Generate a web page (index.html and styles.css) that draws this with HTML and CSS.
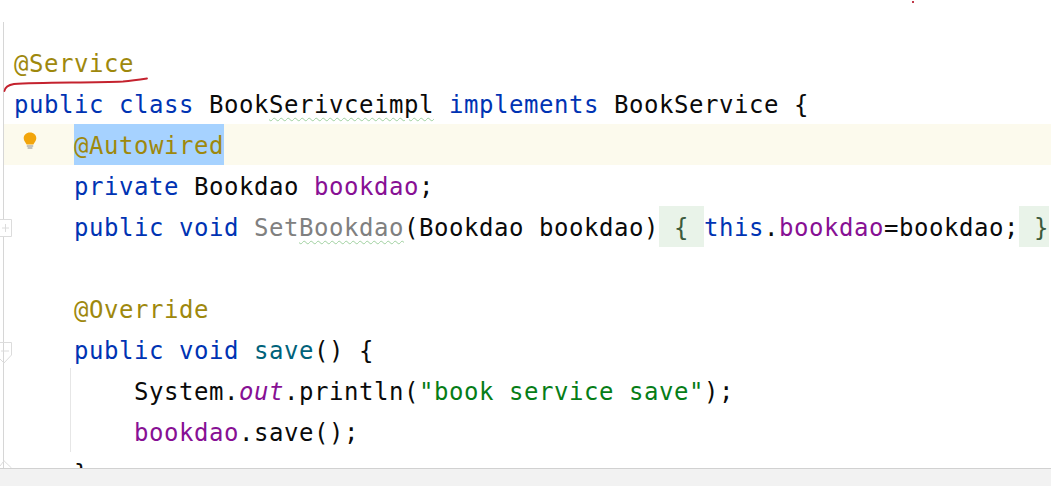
FILE: index.html
```html
<!DOCTYPE html>
<html lang="en">
<head>
<meta charset="utf-8">
<title>BookSerivceimpl</title>
<link rel="stylesheet" href="styles.css">
</head>
<body>
<main class="editor">
  <div class="gutter-line"></div>
  <div class="red-dot"></div>
  <svg class="scribble" width="160" height="20" viewBox="0 0 160 20" aria-hidden="true"><path d="M1.5 16 C2 12 5 10 11 9 C37 7 87 8 120 6.5 C130 5.5 137 4.5 144 3.5" fill="none" stroke="#c4222e" stroke-width="1.8" stroke-linecap="round"/></svg>
  <svg class="bulb" width="14" height="19" viewBox="0 0 14 19" aria-hidden="true"><path d="M7 0.5 C3.2 0.5 0.7 3 0.7 6.2 C0.7 9 2.6 10.2 3.6 12.4 L10.4 12.4 C11.4 10.2 13.3 9 13.3 6.2 C13.3 3 10.8 0.5 7 0.5 Z" fill="#f2a50c"/><path d="M3.8 14 H10.2 M4.6 16 H9.4" stroke="#8a8a8a" stroke-width="1.2" fill="none"/></svg>
  <svg class="fold fold-plus" width="13" height="18" viewBox="0 0 13 18" aria-hidden="true"><path d="M0 .5 H11.5 V17.5 H0 M2 9 H9 M5.5 5 V13" fill="none" stroke="#dcdcdc"/></svg>
  <svg class="fold fold-open" width="13" height="22" viewBox="0 0 13 22" aria-hidden="true"><path d="M0 .5 H11.5 V13 L4 21 L0 17 M1 9 H9" fill="none" stroke="#dcdcdc"/></svg>
  <svg class="fold fold-close" width="13" height="9" viewBox="0 0 13 9" aria-hidden="true"><path d="M0 6 L4 .8 L11.5 8" fill="none" stroke="#dcdcdc"/></svg>
  <div class="indent-guide"></div>
  <div class="code">
    <div class="line"><span class="ann">@Service</span></div>
    <div class="line"><span class="kw">public class</span> Book<span class="weak">Serivceimpl</span> <span class="kw">implements</span> BookService {</div>
    <div class="line line-caret">    <span class="ann sel">@Autowired</span></div>
    <div class="line">    <span class="kw">private</span> Bookdao <span class="field">bookdao</span>;</div>
    <div class="line">    <span class="kw">public void</span> <span class="unused">Set<span class="weak">Bookdao</span></span>(Bookdao bookdao)<span class="brace"> { </span><span class="kw">this</span>.<span class="field">bookdao</span>=bookdao;<span class="brace"> }</span></div>
    <div class="line"></div>
    <div class="line">    <span class="ann">@Override</span></div>
    <div class="line">    <span class="kw">public void</span> <span class="method">save</span>() {</div>
    <div class="line">        System.<span class="field static">out</span>.println(<span class="str">"book service save"</span>);</div>
    <div class="line">        <span class="field">bookdao</span>.save();</div>
    <div class="line">    }</div>
  </div>
</main>
<footer class="status"></footer>
</body>
</html>
```
FILE: styles.css
```css
html, body { margin: 0; height: 100%; overflow: hidden; background: #fff; }
body { display: flex; flex-direction: column; }

.editor { position: relative; flex: 1; min-height: 0; overflow: hidden; }
.status { height: 17px; flex: none; background: #f2f2f2; border-top: 1px solid #d1d1d1; }

.code {
  padding: 42px 0 0 14px;
  font-family: "DejaVu Sans Mono", "Liberation Mono", monospace;
  font-size: 24px;
  letter-spacing: 0.55px;
  color: #0a0a0a;
}
.line { height: 41px; line-height: 45px; white-space: pre; }
.line-caret { background: #fcfaed; margin-left: -11px; padding-left: 11px; }

.ann { color: #9e880d; }
.kw { color: #0033b3; }
.field { color: #871094; }
.static { font-style: italic; }
.method { color: #00627a; }
.str { color: #067d17; }
.unused { color: #808080; }
.sel { background: #a6d2ff; display: inline-block; height: 41px; }
.brace { background: #e9f3e9; color: #3c5a3c; display: inline-block; height: 41px; }
.weak { text-decoration: underline wavy #9fd09f 1px; text-underline-offset: 4px; }

.gutter-line { position: absolute; left: 3px; top: 22px; bottom: 0; width: 1px; background: #d6d6d6; z-index: 1; }
.indent-guide { position: absolute; left: 70px; top: 368px; height: 84px; width: 1px; background: #e6e6e6; }
.red-dot { position: absolute; left: 912px; top: 1px; width: 2px; height: 2px; background: #c0394a; }
.scribble { position: absolute; left: 3px; top: 75px; z-index: 2; }
.bulb { position: absolute; left: 23px; top: 132px; z-index: 2; }
.fold { position: absolute; left: 0; z-index: 2; background: #fff; }
.fold-plus { top: 219px; }
.fold-open { top: 342px; background: none; }
.fold-close { top: 460px; background: none; }
```
